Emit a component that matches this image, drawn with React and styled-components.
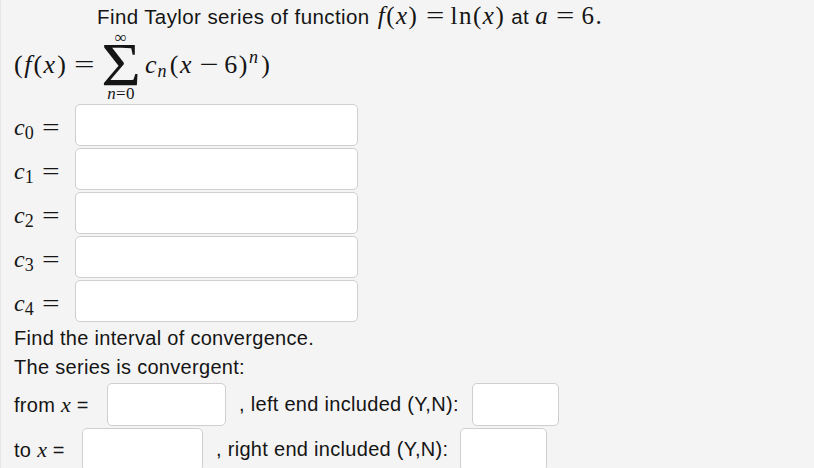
import React from "react";
import styled, { createGlobalStyle } from "styled-components";

const GlobalStyle = createGlobalStyle`
  html, body {
    margin: 0;
    padding: 0;
    background: #f4f4f4;
  }
  body {
    font-family: "Liberation Sans", Arial, sans-serif;
    color: #151515;
  }
`;

const Page = styled.div`
  width: 814px;
  height: 468px;
  overflow: hidden;
  box-sizing: border-box;
  padding-left: 13px;
  border-left: 1px solid #e6e6e6;
  font-size: 20px;
  letter-spacing: 0.3px;
`;

const Title = styled.div`
  height: 32px;
  line-height: 32px;
  padding-left: 83px;
  font-size: 20.5px;
  letter-spacing: 0.4px;
  white-space: nowrap;
`;

/* math pieces, MathJax-like */
const Mi = styled.span`
  font-family: "Liberation Serif", "DejaVu Serif", serif;
  font-style: italic;
  font-size: ${(p) => p.size || 26}px;
  letter-spacing: ${(p) => (p.ls == null ? 2 : p.ls)}px;
  margin-left: ${(p) => p.ml || 0}px;
`;

const Mo = styled.span`
  font-family: "Liberation Serif", "DejaVu Serif", serif;
  font-style: normal;
  font-size: ${(p) => p.size || 26}px;
  letter-spacing: 1.5px;
`;

const Eq = styled.span`
  display: inline-block;
  font-family: "Liberation Serif", "DejaVu Serif", serif;
  font-style: normal;
  font-size: ${(p) => p.size || 26}px;
  letter-spacing: 0;
  transform: scaleX(${(p) => p.sx || 1.3});
  margin: 0 ${(p) => p.mr}px 0 ${(p) => p.ml}px;
`;

const Formula = styled.div`
  display: flex;
  align-items: flex-start;
  height: 72px;
  white-space: nowrap;
`;

const MainLine = styled.span`
  display: inline-block;
  padding-top: 18px;
  line-height: 30px;
`;

const Sum = styled.span`
  display: inline-flex;
  flex-direction: column;
  align-items: center;
  width: 36px;
  margin: 0 6px 0 3px;
  font-family: "Liberation Serif", "DejaVu Serif", serif;
`;

const Limit = styled.span`
  font-size: 17px;
  font-style: ${(p) => (p.up ? "normal" : "italic")};
  line-height: ${(p) => p.lh || 17}px;
`;

const Sigma = styled.span`
  font-size: 62px;
  line-height: 40px;
  height: 40px;
  transform: scaleX(1.1);
`;

const Script = styled.span`
  font-family: "Liberation Serif", "DejaVu Serif", serif;
  font-style: ${(p) => (p.up ? "normal" : "italic")};
  font-size: ${(p) => p.size || 18}px;
  position: relative;
  top: ${(p) => p.shift}px;
  margin-right: ${(p) => p.mr || 0}px;
`;

const Rows = styled.div`
  display: flex;
  flex-direction: column;
  gap: 2px;
`;

const CoefRow = styled.div`
  display: flex;
  align-items: center;
  height: 42px;
`;

const CoefLabel = styled.span`
  width: 61px;
  flex: none;
  white-space: nowrap;
  padding-top: 4px;
`;

const Box = styled.input`
  box-sizing: border-box;
  width: ${(p) => p.w}px;
  height: ${(p) => p.h || 43}px;
  border: 1px solid #cfcfcf;
  border-radius: 5px;
  background: #fff;
  outline: none;
  flex: none;
`;

const Line = styled.div`
  line-height: 29px;
  height: 29px;
  white-space: nowrap;
`;

const IntervalRow = styled.div`
  display: flex;
  align-items: center;
  height: 45px;
  white-space: nowrap;
`;

const Label = styled.span`
  display: inline-block;
  box-sizing: border-box;
  width: ${(p) => p.w}px;
  padding-left: ${(p) => p.pl || 0}px;
  flex: none;
`;

const coefs = [0, 1, 2, 3, 4];

export default function App() {
  return (
    <>
      <GlobalStyle />
      <Page>
        <Title>
          Find Taylor series of function{" "}
          <Mi size={25} ls={1.5} ml={2}>f</Mi>
          <Mo size={25}>(</Mo>
          <Mi size={25} ls={1.5}>x</Mi>
          <Mo size={25}>)</Mo>
          <Eq size={25} ml={10} mr={8}>=</Eq>
          <Mo size={25}>ln(</Mo>
          <Mi size={25} ls={1.5}>x</Mi>
          <Mo size={25}>)</Mo> at <Mi size={25} ls={1.5}>a</Mi>
          <Eq size={25} ml={9} mr={9}>=</Eq>
          <Mo size={25}>6.</Mo>
        </Title>
        <Formula>
          <MainLine>
            <Mo>(</Mo>
            <Mi>f</Mi>
            <Mo>(</Mo>
            <Mi>x</Mi>
            <Mo>)</Mo>
            <Eq sx={1.4} ml={10} mr={8}>=</Eq>
          </MainLine>
          <Sum>
            <Limit up lh={12}>∞</Limit>
            <Sigma>Σ</Sigma>
            <Limit lh={20}>
              n<Limit up>=0</Limit>
            </Limit>
          </Sum>
          <MainLine>
            <Mi ls={1}>c</Mi>
            <Script shift={4} mr={3}>n</Script>
            <Mo>(</Mo>
            <Mi>x</Mi>
            <Eq ml={8} mr={8}>−</Eq>
            <Mo>6)</Mo>
            <Script shift={-10} mr={3}>n</Script>
            <Mo>)</Mo>
          </MainLine>
        </Formula>
        <Rows>
          {coefs.map((n) => (
            <CoefRow key={n}>
              <CoefLabel>
                <Mi size={24} ls={0}>c</Mi>
                <Script up shift={4}>{n}</Script>
                <Eq size={24} ml={10} mr={10}>=</Eq>
              </CoefLabel>
              <Box w={283} h={42} />
            </CoefRow>
          ))}
        </Rows>
        <Line style={{ marginTop: 2 }}>Find the interval of convergence.</Line>
        <Line>The series is convergent:</Line>
        <IntervalRow>
          <Label w={93}>
            from <Mi size={22} ls={0}>x</Mi> =
          </Label>
          <Box w={119} />
          <Label w={246} pl={13}>
            , left end included (Y,N):
          </Label>
          <Box w={87} />
        </IntervalRow>
        <IntervalRow>
          <Label w={68}>
            to <Mi size={22} ls={0}>x</Mi> =
          </Label>
          <Box w={121} />
          <Label w={257} pl={13}>
            , right end included (Y,N):
          </Label>
          <Box w={87} />
        </IntervalRow>
      </Page>
    </>
  );
}
